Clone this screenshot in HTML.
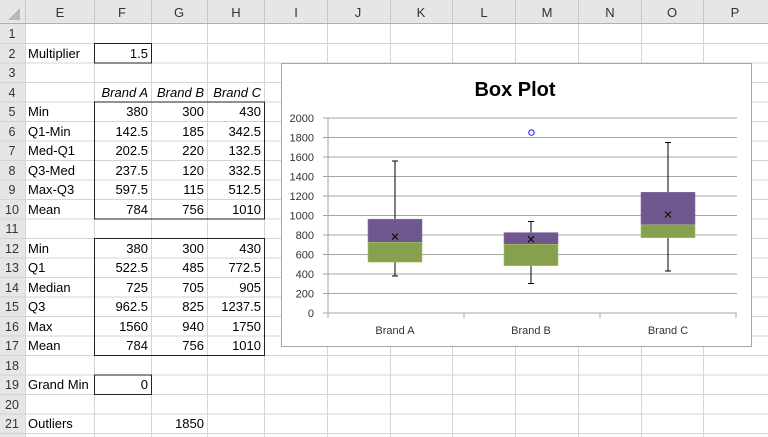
<!DOCTYPE html>
<html><head><meta charset="utf-8"><style>
html,body{margin:0;padding:0;background:#fff;width:768px;height:437px;overflow:hidden}
svg{display:block}
text{font-family:"Liberation Sans",sans-serif}
</style></head><body>
<svg width="768" height="437" xmlns="http://www.w3.org/2000/svg">
<rect x="0" y="0" width="768" height="437" fill="#fff"/>
<!-- header -->
<rect x="0" y="0" width="768" height="24" fill="#e6e6e6"/>
<rect x="0" y="0" width="25" height="437" fill="#e6e6e6"/>
<g stroke="#d4d4d4" stroke-width="1">
<line x1="25.5" y1="24" x2="25.5" y2="437"/>
<line x1="94.5" y1="24" x2="94.5" y2="437"/><line x1="151.5" y1="24" x2="151.5" y2="437"/>
<line x1="207.5" y1="24" x2="207.5" y2="437"/><line x1="264.5" y1="24" x2="264.5" y2="437"/>
<line x1="327.5" y1="24" x2="327.5" y2="437"/><line x1="390.5" y1="24" x2="390.5" y2="437"/>
<line x1="452.5" y1="24" x2="452.5" y2="437"/><line x1="515.5" y1="24" x2="515.5" y2="437"/>
<line x1="578.5" y1="24" x2="578.5" y2="437"/><line x1="641.5" y1="24" x2="641.5" y2="437"/>
<line x1="703.5" y1="24" x2="703.5" y2="437"/>
</g>
<g stroke="#c6c6c6">
<line x1="25.5" y1="0" x2="25.5" y2="24"/><line x1="94.5" y1="0" x2="94.5" y2="24"/><line x1="151.5" y1="0" x2="151.5" y2="24"/><line x1="207.5" y1="0" x2="207.5" y2="24"/><line x1="264.5" y1="0" x2="264.5" y2="24"/><line x1="327.5" y1="0" x2="327.5" y2="24"/><line x1="390.5" y1="0" x2="390.5" y2="24"/><line x1="452.5" y1="0" x2="452.5" y2="24"/><line x1="515.5" y1="0" x2="515.5" y2="24"/><line x1="578.5" y1="0" x2="578.5" y2="24"/><line x1="641.5" y1="0" x2="641.5" y2="24"/><line x1="703.5" y1="0" x2="703.5" y2="24"/>
<line x1="0" y1="23.5" x2="768" y2="23.5" stroke="#b0b0b0"/>
</g>
<g stroke="#d4d4d4">
<line x1="0" y1="43.5" x2="768" y2="43.5"/><line x1="0" y1="63" x2="768" y2="63"/><line x1="0" y1="82.5" x2="768" y2="82.5"/><line x1="0" y1="102" x2="768" y2="102"/><line x1="0" y1="121.5" x2="768" y2="121.5"/><line x1="0" y1="141" x2="768" y2="141"/><line x1="0" y1="160.5" x2="768" y2="160.5"/><line x1="0" y1="180" x2="768" y2="180"/><line x1="0" y1="199.5" x2="768" y2="199.5"/><line x1="0" y1="219" x2="768" y2="219"/><line x1="0" y1="238.5" x2="768" y2="238.5"/><line x1="0" y1="258" x2="768" y2="258"/><line x1="0" y1="277.5" x2="768" y2="277.5"/><line x1="0" y1="297" x2="768" y2="297"/><line x1="0" y1="316.5" x2="768" y2="316.5"/><line x1="0" y1="336" x2="768" y2="336"/><line x1="0" y1="355.5" x2="768" y2="355.5"/><line x1="0" y1="375" x2="768" y2="375"/><line x1="0" y1="394.5" x2="768" y2="394.5"/><line x1="0" y1="414" x2="768" y2="414"/><line x1="0" y1="433.5" x2="768" y2="433.5"/>
</g>
<!-- corner triangle -->
<polygon points="20,8 20,20 8,20" fill="#b8b8b8"/>
<!-- col headers -->
<g font-size="13" fill="#333" text-anchor="middle">
<text x="60" y="17">E</text><text x="122" y="17">F</text><text x="179" y="17">G</text><text x="236" y="17">H</text><text x="296" y="17">I</text><text x="358" y="17">J</text><text x="421" y="17">K</text><text x="484" y="17">L</text><text x="547" y="17">M</text><text x="610" y="17">N</text><text x="672" y="17">O</text><text x="735" y="17">P</text>
</g>
<g font-size="12.5" fill="#333" text-anchor="middle">
<text x="12" y="38">1</text><text x="12" y="58">2</text><text x="12" y="77">3</text><text x="12" y="97">4</text><text x="12" y="116">5</text><text x="12" y="136">6</text><text x="12" y="155">7</text><text x="12" y="175">8</text><text x="12" y="194">9</text><text x="12" y="214">10</text><text x="12" y="233">11</text><text x="12" y="253">12</text><text x="12" y="272">13</text><text x="12" y="292">14</text><text x="12" y="311">15</text><text x="12" y="331">16</text><text x="12" y="350">17</text><text x="12" y="370">18</text><text x="12" y="389">19</text><text x="12" y="409">20</text><text x="12" y="428">21</text>
</g>
<!-- borders -->
<g stroke="#222" fill="none" stroke-width="1">
<rect x="94.5" y="43.5" width="57" height="19.5"/>
<rect x="94.5" y="102" width="170" height="117"/>
<rect x="94.5" y="238.5" width="170" height="117"/>
<rect x="94.5" y="375" width="57" height="19.5"/>
</g>
<!-- cell text -->
<g font-size="13" fill="#000">
<text x="28" y="58">Multiplier</text>
<text x="28" y="116">Min</text><text x="28" y="136">Q1-Min</text><text x="28" y="155">Med-Q1</text><text x="28" y="175">Q3-Med</text><text x="28" y="194">Max-Q3</text><text x="28" y="214">Mean</text>
<text x="28" y="253">Min</text><text x="28" y="272">Q1</text><text x="28" y="292">Median</text><text x="28" y="311">Q3</text><text x="28" y="331">Max</text><text x="28" y="350">Mean</text>
<text x="28" y="389">Grand Min</text><text x="28" y="428">Outliers</text>
</g>
<g font-size="13" fill="#000" text-anchor="end">
<text x="148" y="58">1.5</text>
<g font-style="italic"><text x="148" y="97">Brand A</text><text x="204" y="97">Brand B</text><text x="261" y="97">Brand C</text></g>
<text x="148" y="116">380</text><text x="204" y="116">300</text><text x="261" y="116">430</text>
<text x="148" y="136">142.5</text><text x="204" y="136">185</text><text x="261" y="136">342.5</text>
<text x="148" y="155">202.5</text><text x="204" y="155">220</text><text x="261" y="155">132.5</text>
<text x="148" y="175">237.5</text><text x="204" y="175">120</text><text x="261" y="175">332.5</text>
<text x="148" y="194">597.5</text><text x="204" y="194">115</text><text x="261" y="194">512.5</text>
<text x="148" y="214">784</text><text x="204" y="214">756</text><text x="261" y="214">1010</text>
<text x="148" y="253">380</text><text x="204" y="253">300</text><text x="261" y="253">430</text>
<text x="148" y="272">522.5</text><text x="204" y="272">485</text><text x="261" y="272">772.5</text>
<text x="148" y="292">725</text><text x="204" y="292">705</text><text x="261" y="292">905</text>
<text x="148" y="311">962.5</text><text x="204" y="311">825</text><text x="261" y="311">1237.5</text>
<text x="148" y="331">1560</text><text x="204" y="331">940</text><text x="261" y="331">1750</text>
<text x="148" y="350">784</text><text x="204" y="350">756</text><text x="261" y="350">1010</text>
<text x="148" y="389">0</text>
<text x="204" y="428">1850</text>
</g>
<!-- chart -->
<rect x="281.5" y="63.5" width="470" height="283" fill="#fff" stroke="#a6a6a6"/>
<text x="515" y="96" font-size="20" font-weight="bold" text-anchor="middle" fill="#000">Box Plot</text>
<g stroke="#a6a6a6" stroke-width="1">
<line x1="323" y1="118" x2="737" y2="118"/><line x1="323" y1="137.5" x2="737" y2="137.5"/><line x1="323" y1="157" x2="737" y2="157"/><line x1="323" y1="176.5" x2="737" y2="176.5"/><line x1="323" y1="196" x2="737" y2="196"/><line x1="323" y1="215.5" x2="737" y2="215.5"/><line x1="323" y1="235" x2="737" y2="235"/><line x1="323" y1="254.5" x2="737" y2="254.5"/><line x1="323" y1="274" x2="737" y2="274"/><line x1="323" y1="293.5" x2="737" y2="293.5"/><line x1="323" y1="313" x2="737" y2="313"/>
<line x1="328" y1="118" x2="328" y2="318"/>
<line x1="464" y1="313" x2="464" y2="318"/><line x1="600" y1="313" x2="600" y2="318"/><line x1="736" y1="313" x2="736" y2="318"/>
</g>
<g font-size="11" fill="#333" text-anchor="end">
<text x="314" y="122">2000</text><text x="314" y="141.5">1800</text><text x="314" y="161">1600</text><text x="314" y="180.5">1400</text><text x="314" y="200">1200</text><text x="314" y="219.5">1000</text><text x="314" y="239">800</text><text x="314" y="258.5">600</text><text x="314" y="278">400</text><text x="314" y="297.5">200</text><text x="314" y="317">0</text>
</g>
<g font-size="11" fill="#333" text-anchor="middle">
<text x="395" y="334">Brand A</text><text x="531" y="334">Brand B</text><text x="668" y="334">Brand C</text>
</g>
<!-- whiskers -->
<g stroke="#000" stroke-width="1">
<line x1="395" y1="161" x2="395" y2="276"/><line x1="392" y1="161" x2="398" y2="161"/><line x1="392" y1="276" x2="398" y2="276"/>
<line x1="531" y1="221.5" x2="531" y2="283.5"/><line x1="528" y1="221.5" x2="534" y2="221.5"/><line x1="528" y1="283.5" x2="534" y2="283.5"/>
<line x1="668" y1="142.5" x2="668" y2="271"/><line x1="665" y1="142.5" x2="671" y2="142.5"/><line x1="665" y1="271" x2="671" y2="271"/>
</g>
<!-- boxes -->
<rect x="368" y="219.2" width="54" height="23.1" fill="#70578f" stroke="#8a74a8" stroke-width="0.6"/>
<rect x="368" y="242.3" width="54" height="19.8" fill="#87a04d" stroke="#a6c070" stroke-width="0.6"/>
<rect x="504" y="232.6" width="54" height="11.7" fill="#70578f" stroke="#8a74a8" stroke-width="0.6"/>
<rect x="504" y="244.3" width="54" height="21.4" fill="#87a04d" stroke="#a6c070" stroke-width="0.6"/>
<rect x="641" y="192.3" width="54" height="32.5" fill="#70578f" stroke="#8a74a8" stroke-width="0.6"/>
<rect x="641" y="224.8" width="54" height="12.9" fill="#87a04d" stroke="#a6c070" stroke-width="0.6"/>
<!-- means -->
<g stroke="#111" stroke-width="1.2">
<line x1="392" y1="233.6" x2="398" y2="239.6"/><line x1="398" y1="233.6" x2="392" y2="239.6"/>
<line x1="528" y1="236.3" x2="534" y2="242.3"/><line x1="534" y1="236.3" x2="528" y2="242.3"/>
<line x1="665" y1="211.5" x2="671" y2="217.5"/><line x1="671" y1="211.5" x2="665" y2="217.5"/>
</g>
<circle cx="531.5" cy="132.6" r="2.7" fill="none" stroke="#3a3aff" stroke-width="1.2"/>
</svg>
</body></html>
